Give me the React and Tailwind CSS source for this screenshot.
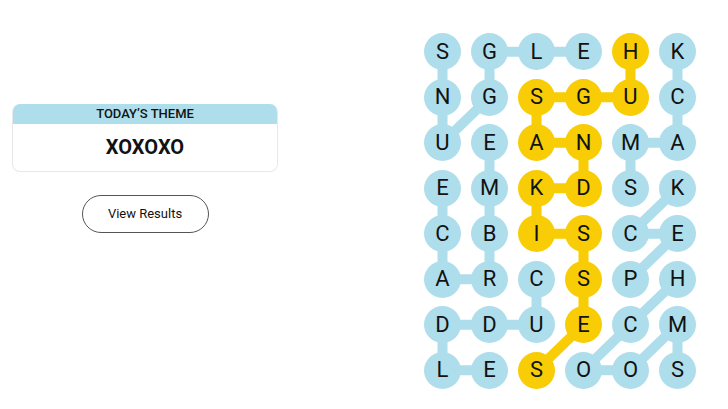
const ROWS = [
  'SGLEHK',
  'NGSGUC',
  'UEANMA',
  'EMKDSK',
  'CBISCE',
  'ARCSPH',
  'DDUECM',
  'LESOOS',
];

const CELL_WIDTH = 47;
const CELL_HEIGHT = 45.5;

// Each path lists the [column, row] of its letters in spelling order.
const SPANGRAM = [[4, 0], [4, 1], [3, 1], [2, 1], [2, 2], [3, 2], [3, 3], [2, 3], [2, 4], [3, 4], [3, 5], [3, 6], [2, 7]];

const THEME_WORDS = [
  [[0, 0], [0, 1], [0, 2], [1, 1], [1, 0], [2, 0], [3, 0]],
  [[4, 3], [4, 2], [5, 2], [5, 1], [5, 0]],
  [[1, 2], [1, 3], [1, 4], [1, 5], [0, 5], [0, 4], [0, 3]],
  [[4, 5], [5, 4], [4, 4], [5, 3]],
  [[2, 5], [2, 6], [1, 6], [0, 6], [0, 7], [1, 7]],
  [[5, 7], [5, 6], [4, 7], [3, 7], [4, 6], [5, 5]],
];

const toPoints = (path) =>
  path.map(([c, r]) => `${(c + 0.5) * CELL_WIDTH},${(r + 0.5) * CELL_HEIGHT}`).join(' ');

const inSpangram = (col, row) => SPANGRAM.some(([c, r]) => c === col && r === row);

function ThemeCard() {
  return (
    <section className="w-full overflow-hidden rounded-lg border border-t-0 border-[#e8e8e8]">
      <h1 className="bg-[#aedeec] text-center text-[13px] leading-5 font-medium">TODAY’S THEME</h1>
      <p className="pt-[9px] pb-[10px] text-center text-xl leading-7 font-bold">XOXOXO</p>
    </section>
  );
}

function Board() {
  return (
    <section aria-label="Board" className="relative grid h-[364px] w-[282px] shrink-0 grid-cols-6 grid-rows-8">
      <svg
        viewBox="0 0 282 364"
        className="absolute inset-0 h-full w-full"
        fill="none"
        strokeWidth="10"
        strokeLinejoin="round"
        aria-hidden="true"
      >
        {THEME_WORDS.map((path) => (
          <polyline key={toPoints(path)} points={toPoints(path)} stroke="#aedeec" />
        ))}
        <polyline points={toPoints(SPANGRAM)} stroke="#f8cd05" />
      </svg>
      {ROWS.map((letters, row) =>
        [...letters].map((letter, col) => (
          <button
            key={`${col}-${row}`}
            type="button"
            className={`relative flex size-[37px] items-center justify-center place-self-center rounded-full text-[22px] leading-none ${
              inSpangram(col, row) ? 'bg-[#f8cd05]' : 'bg-[#aedeec]'
            }`}
          >
            {letter}
          </button>
        )),
      )}
    </section>
  );
}

export default function App() {
  return (
    <main className="flex min-h-screen items-start justify-between bg-white pr-[27px] pl-3 font-[Roboto,'Liberation_Sans',sans-serif] text-[#121212]">
      <div className="flex w-[266px] flex-col items-center gap-[23px] pt-[104px]">
        <ThemeCard />
        <button
          type="button"
          className="h-[38px] w-[127px] rounded-full border border-[#555555] text-[13px]"
        >
          View Results
        </button>
      </div>
      <div className="pt-[29px]">
        <Board />
      </div>
    </main>
  );
}
